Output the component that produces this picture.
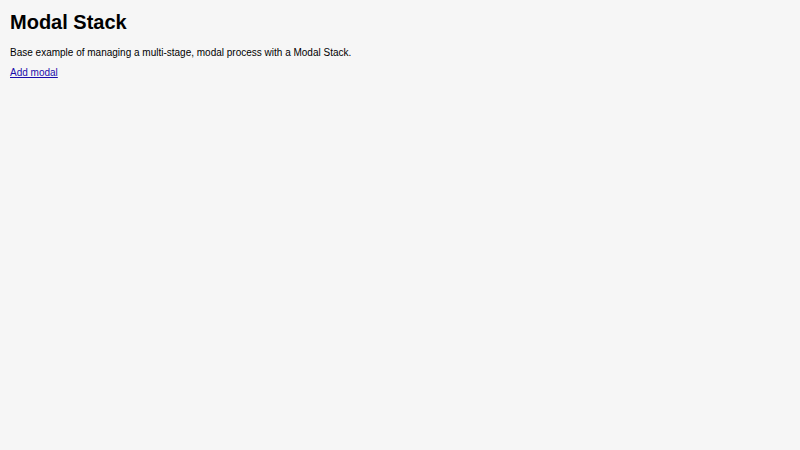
export default function App() {
  return (
    <div className="min-h-[450px] bg-[#f6f6f6] p-[10px] text-black font-['Liberation_Sans',Arial,sans-serif]">
      <h1 className="text-[20px] font-bold leading-[24px]">Modal Stack</h1>
      <p className="mt-[13px] text-[10px] leading-[12px]">
        Base example of managing a multi-stage, modal process with a Modal Stack.
      </p>
      <p className="mt-[8px] text-[10px] leading-[12px]">
        <a href="#" className="text-[#1a0dab] underline">Add modal</a>
      </p>
    </div>
  )
}
